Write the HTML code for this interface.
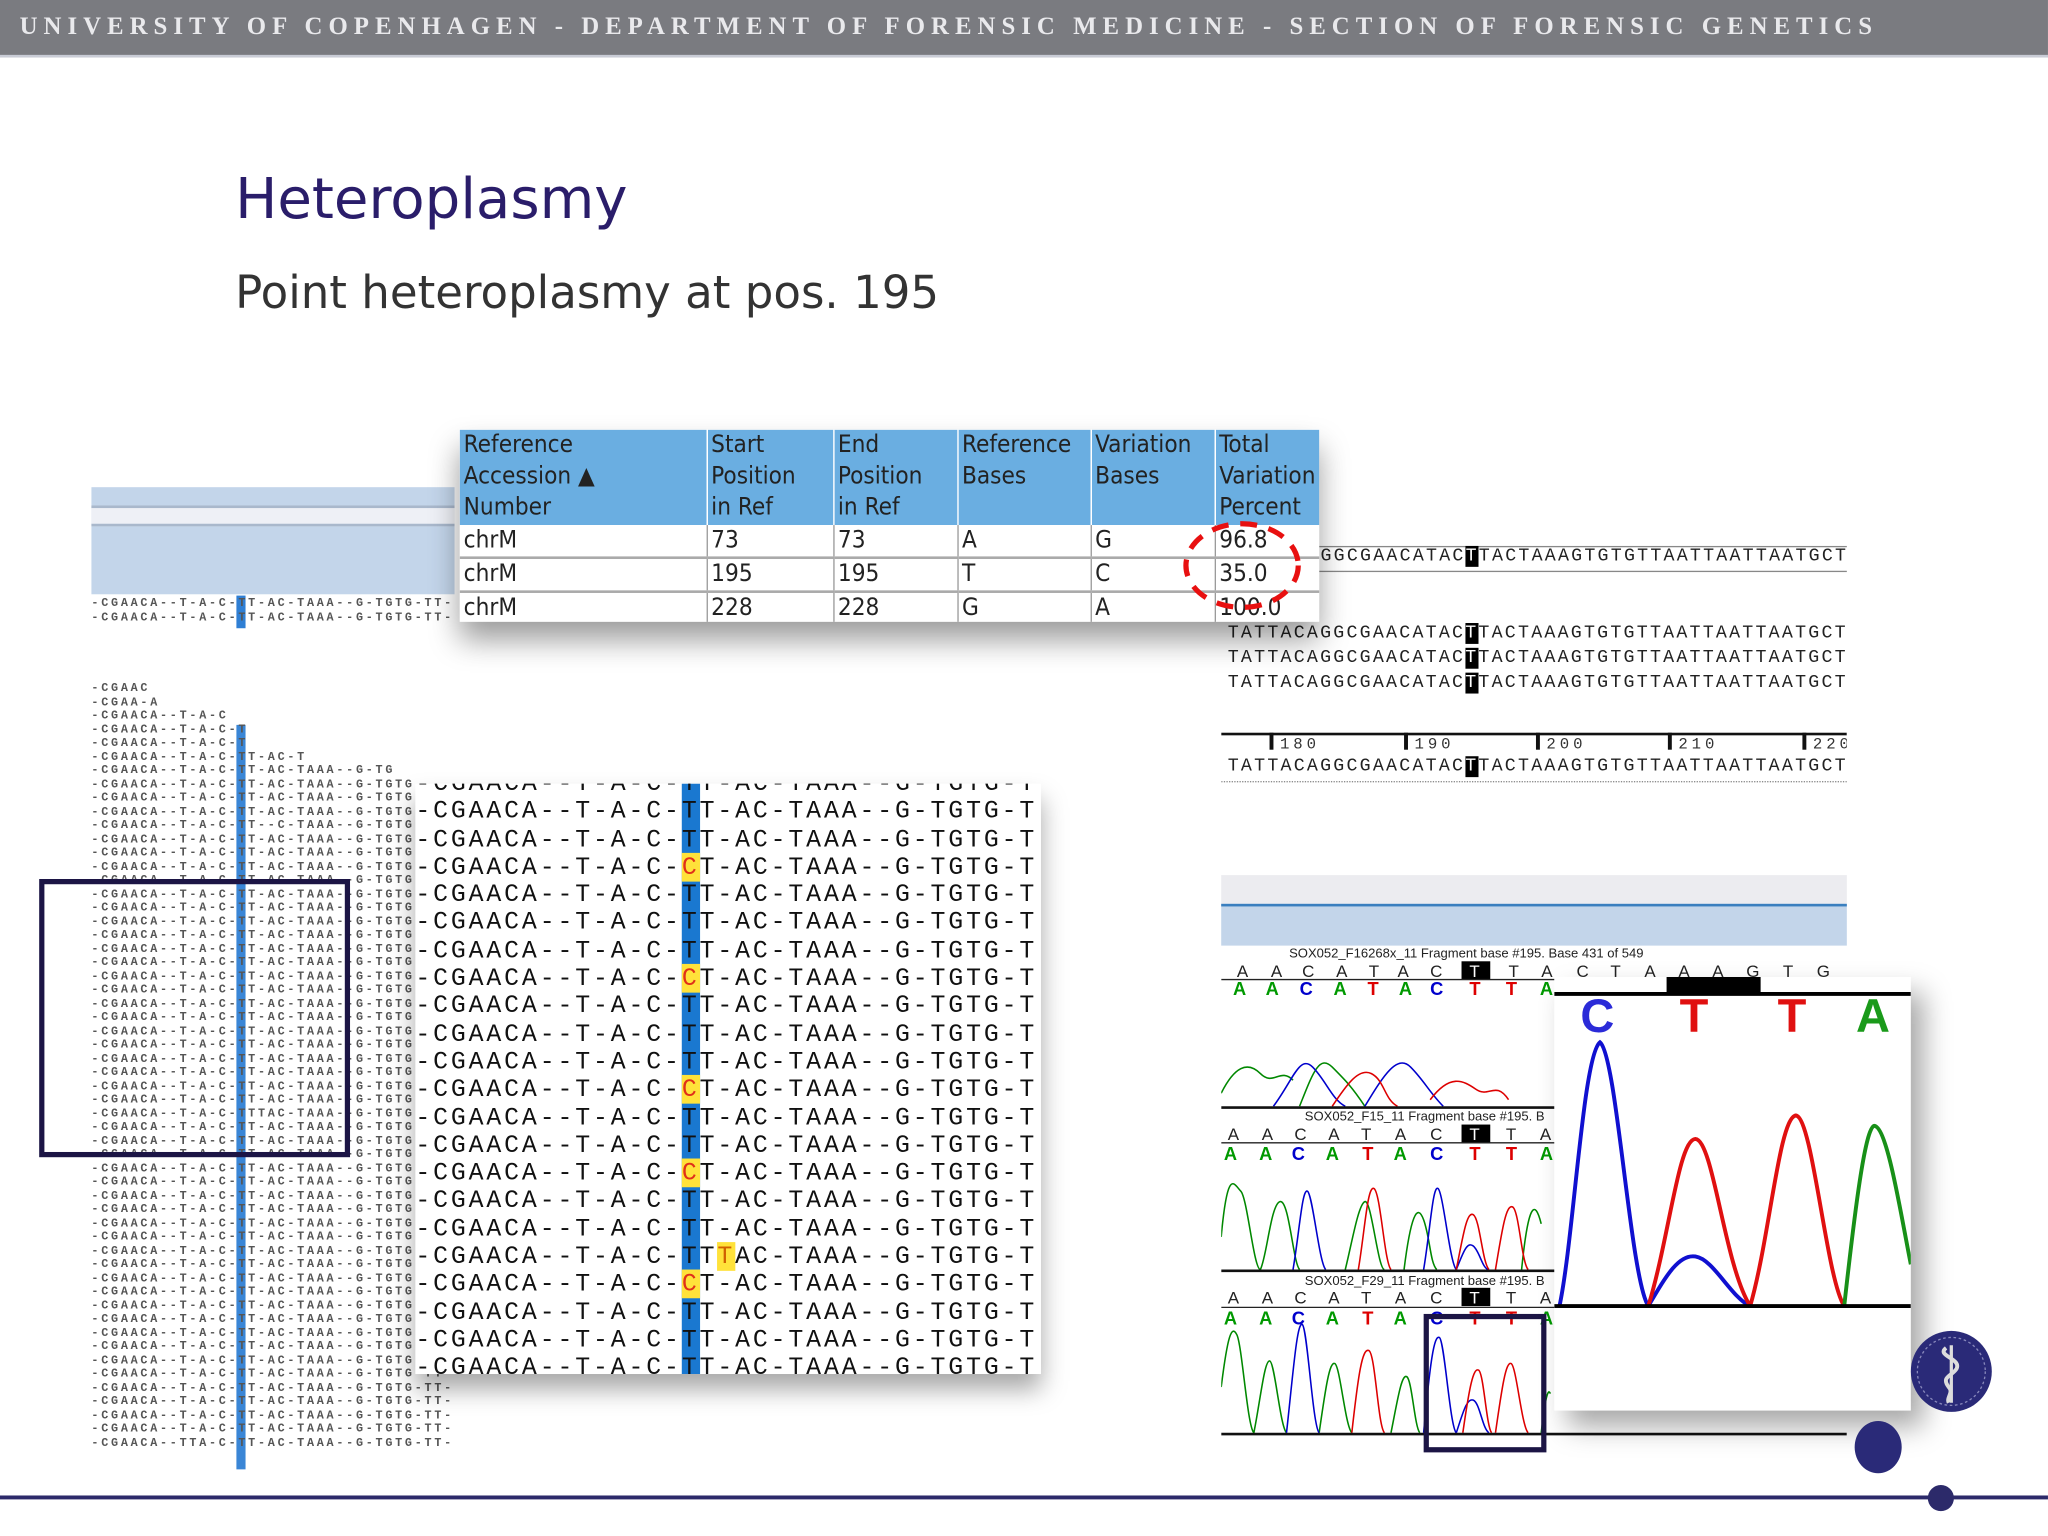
<!DOCTYPE html>
<html><head><meta charset="utf-8">
<style>
html,body{margin:0;padding:0;background:#fff;}
body{width:2048px;height:1536px;overflow:hidden;position:relative;}
#c{position:absolute;left:0;top:0;width:1568px;height:1176px;transform:scale(1.3061);transform-origin:0 0;}
.a{position:absolute;}
.hdr{left:0;top:0;width:1568px;height:42px;background:#7a7b80;border-bottom:2px solid #c9ccd6;}
.hdr span{position:absolute;left:15px;top:10px;font-family:"Liberation Serif",serif;font-size:19px;font-weight:bold;letter-spacing:4.6px;color:#e9e9ec;white-space:nowrap;}
.title{left:180px;top:128px;font-family:"DejaVu Sans",sans-serif;font-size:43px;color:#2a1d6a;}
.sub{left:180px;top:205px;font-family:"DejaVu Sans",sans-serif;font-size:34.5px;color:#333;}
table{border-collapse:collapse;font-family:"DejaVu Sans Condensed","Liberation Sans",sans-serif;font-size:18.5px;color:#222;}
td{padding:0 0 0 3px;vertical-align:top;white-space:nowrap;overflow:hidden;}
.th td{background:#6aaee1;line-height:24px;height:73px;border-right:1px solid #fff;}
.tr td{background:#fff;height:24px;line-height:24px;border-right:1px solid #999;border-bottom:2px solid #aaa;}
.mono{font-family:"Liberation Mono",monospace;white-space:pre;}
.lseq{font-size:9px;letter-spacing:2.1px;line-height:10.5px;color:#555;font-weight:bold;}
.mseq{font-size:19px;letter-spacing:2.2px;line-height:21.3px;color:#111;}
.rseq{font-size:14px;letter-spacing:1.7px;color:#222;}
.hl{background:#000;color:#fff;}
.yc{background:#ffe23a;color:#e0301a;}
</style></head><body><div id="c">
<div class="a hdr"><span>UNIVERSITY OF COPENHAGEN - DEPARTMENT OF FORENSIC MEDICINE - SECTION OF FORENSIC GENETICS</span></div>
<div class="a title">Heteroplasmy</div>
<div class="a sub">Point heteroplasmy at pos. 195</div>

<div class="a" style="left:70px;top:373px;width:278px;height:82px;background:#c3d5ea;"></div>
<div class="a" style="left:70px;top:387px;width:278px;height:12px;background:#eef0f6;border-top:2px solid #a9b8cc;border-bottom:2px solid #a9b8cc;"></div>
<div class="a" style="left:181px;top:456px;width:7px;height:25px;background:#2f7fd4;"></div>
<div class="a mono lseq" style="left:70px;top:457px;">-CGAACA--T-A-C-TT-AC-TAAA--G-TGTG-TT-
-CGAACA--T-A-C-TT-AC-TAAA--G-TGTG-TT-</div>

<div class="a" style="left:181px;top:555px;width:7px;height:570px;background:#3a86d6;"></div>
<div class="a mono lseq" style="left:70px;top:522px;">-CGAAC
-CGAA-A
-CGAACA--T-A-C
-CGAACA--T-A-C-T
-CGAACA--T-A-C-T
-CGAACA--T-A-C-TT-AC-T
-CGAACA--T-A-C-TT-AC-TAAA--G-TG
-CGAACA--T-A-C-TT-AC-TAAA--G-TGTG
-CGAACA--T-A-C-TT-AC-TAAA--G-TGTG
-CGAACA--T-A-C-TT-AC-TAAA--G-TGTG
-CGAACA--T-A-C-TT--C-TAAA--G-TGTG
-CGAACA--T-A-C-TT-AC-TAAA--G-TGTG
-CGAACA--T-A-C-TT-AC-TAAA--G-TGTG
-CGAACA--T-A-C-TT-AC-TAAA--G-TGTG
-CGAACA--T-A-C-TT-AC-TAAA--G-TGTG
-CGAACA--T-A-C-TT-AC-TAAA--G-TGTG
-CGAACA--T-A-C-TT-AC-TAAA--G-TGTG
-CGAACA--T-A-C-TT-AC-TAAA--G-TGTG
-CGAACA--T-A-C-TT-AC-TAAA--G-TGTG
-CGAACA--T-A-C-TT-AC-TAAA--G-TGTG
-CGAACA--T-A-C-TT-AC-TAAA--G-TGTG
-CGAACA--T-A-C-TT-AC-TAAA--G-TGTG
-CGAACA--T-A-C-TT-AC-TAAA--G-TGTG
-CGAACA--T-A-C-TT-AC-TAAA--G-TGTG
-CGAACA--T-A-C-TT-AC-TAAA--G-TGTG
-CGAACA--T-A-C-TT-AC-TAAA--G-TGTG
-CGAACA--T-A-C-TT-AC-TAAA--G-TGTG
-CGAACA--T-A-C-TT-AC-TAAA--G-TGTG
-CGAACA--T-A-C-TT-AC-TAAA--G-TGTG
-CGAACA--T-A-C-TT-AC-TAAA--G-TGTG
-CGAACA--T-A-C-TT-AC-TAAA--G-TGTG
-CGAACA--T-A-C-TTTAC-TAAA--G-TGTG
-CGAACA--T-A-C-TT-AC-TAAA--G-TGTG
-CGAACA--T-A-C-TT-AC-TAAA--G-TGTG
-CGAACA--T-A-C-TT-AC-TAAA--G-TGTG
-CGAACA--T-A-C-TT-AC-TAAA--G-TGTG
-CGAACA--T-A-C-TT-AC-TAAA--G-TGTG
-CGAACA--T-A-C-TT-AC-TAAA--G-TGTG
-CGAACA--T-A-C-TT-AC-TAAA--G-TGTG
-CGAACA--T-A-C-TT-AC-TAAA--G-TGTG
-CGAACA--T-A-C-TT-AC-TAAA--G-TGTG
-CGAACA--T-A-C-TT-AC-TAAA--G-TGTG
-CGAACA--T-A-C-TT-AC-TAAA--G-TGTG
-CGAACA--T-A-C-TT-AC-TAAA--G-TGTG
-CGAACA--T-A-C-TT-AC-TAAA--G-TGTG
-CGAACA--T-A-C-TT-AC-TAAA--G-TGTG
-CGAACA--T-A-C-TT-AC-TAAA--G-TGTG
-CGAACA--T-A-C-TT-AC-TAAA--G-TGTG
-CGAACA--T-A-C-TT-AC-TAAA--G-TGTG-TT-
-CGAACA--T-A-C-TT-AC-TAAA--G-TGTG-TT-
-CGAACA--T-A-C-TT-AC-TAAA--G-TGTG-TT-
-CGAACA--T-A-C-TT-AC-TAAA--G-TGTG-TT-
-CGAACA--T-A-C-TT-AC-TAAA--G-TGTG-TT-
-CGAACA--T-A-C-TT-AC-TAAA--G-TGTG-TT-
-CGAACA--T-A-C-TT-AC-TAAA--G-TGTG-TT-
-CGAACA--TTA-C-TT-AC-TAAA--G-TGTG-TT-</div>
<div class="a" style="left:30px;top:673px;width:230px;height:205px;border:4px solid #1c1545;"></div>

<div class="a" style="left:318px;top:600px;width:479px;height:452px;background:#fff;box-shadow:0 12px 18px rgba(0,0,0,.35);overflow:hidden;">
<div class="a" style="left:204px;top:0;width:14px;height:452px;background:#1a78d0;"></div>
<div class="a mono mseq" style="left:0px;top:-10px;">-CGAACA--T-A-C-TT-AC-TAAA--G-TGTG-T
-CGAACA--T-A-C-TT-AC-TAAA--G-TGTG-T
-CGAACA--T-A-C-TT-AC-TAAA--G-TGTG-T
-CGAACA--T-A-C-<span class="yc">C</span>T-AC-TAAA--G-TGTG-T
-CGAACA--T-A-C-TT-AC-TAAA--G-TGTG-T
-CGAACA--T-A-C-TT-AC-TAAA--G-TGTG-T
-CGAACA--T-A-C-TT-AC-TAAA--G-TGTG-T
-CGAACA--T-A-C-<span class="yc">C</span>T-AC-TAAA--G-TGTG-T
-CGAACA--T-A-C-TT-AC-TAAA--G-TGTG-T
-CGAACA--T-A-C-TT-AC-TAAA--G-TGTG-T
-CGAACA--T-A-C-TT-AC-TAAA--G-TGTG-T
-CGAACA--T-A-C-<span class="yc">C</span>T-AC-TAAA--G-TGTG-T
-CGAACA--T-A-C-TT-AC-TAAA--G-TGTG-T
-CGAACA--T-A-C-TT-AC-TAAA--G-TGTG-T
-CGAACA--T-A-C-<span class="yc">C</span>T-AC-TAAA--G-TGTG-T
-CGAACA--T-A-C-TT-AC-TAAA--G-TGTG-T
-CGAACA--T-A-C-TT-AC-TAAA--G-TGTG-T
-CGAACA--T-A-C-TT<span class="yc" style="color:#d06000">T</span>AC-TAAA--G-TGTG-T
-CGAACA--T-A-C-<span class="yc">C</span>T-AC-TAAA--G-TGTG-T
-CGAACA--T-A-C-TT-AC-TAAA--G-TGTG-T
-CGAACA--T-A-C-TT-AC-TAAA--G-TGTG-T
-CGAACA--T-A-C-TT-AC-TAAA--G-TGTG-T</div>
</div>

<div class="a" style="left:935px;top:418px;width:479px;border-top:1px solid #888;"></div>
<div class="a" style="left:935px;top:437px;width:479px;border-top:1px solid #888;"></div>
<div class="a" style="left:935px;top:415px;width:479px;height:200px;overflow:hidden;">
<div class="a mono rseq" style="left:76px;top:3px;">GGCGAACATAC<span class="hl">T</span>TACTAAAGTGTGTTAATTAATTAATGCT</div>
<div class="a mono rseq" style="left:5px;top:61px;line-height:19px;">TATTACAGGCGAACATAC<span class="hl">T</span>TACTAAAGTGTGTTAATTAATTAATGCT
TATTACAGGCGAACATAC<span class="hl">T</span>TACTAAAGTGTGTTAATTAATTAATGCT
TATTACAGGCGAACATAC<span class="hl">T</span>TACTAAAGTGTGTTAATTAATTAATGCT</div>
<div class="a" style="left:0;top:146px;width:479px;height:2px;background:#111;"></div>
<div class="a" style="left:37px;top:146px;width:3px;height:13px;background:#111;"></div>
<div class="a" style="left:140px;top:146px;width:3px;height:13px;background:#111;"></div>
<div class="a" style="left:241px;top:146px;width:3px;height:13px;background:#111;"></div>
<div class="a" style="left:342px;top:146px;width:3px;height:13px;background:#111;"></div>
<div class="a" style="left:445px;top:146px;width:3px;height:13px;background:#111;"></div>
<div class="a mono" style="left:45px;top:148px;font-size:12px;letter-spacing:3px;color:#333;">180</div>
<div class="a mono" style="left:148px;top:148px;font-size:12px;letter-spacing:3px;color:#333;">190</div>
<div class="a mono" style="left:249px;top:148px;font-size:12px;letter-spacing:3px;color:#333;">200</div>
<div class="a mono" style="left:350px;top:148px;font-size:12px;letter-spacing:3px;color:#333;">210</div>
<div class="a mono" style="left:453px;top:148px;font-size:12px;letter-spacing:3px;color:#333;">220</div>
<div class="a mono rseq" style="left:5px;top:164px;">TATTACAGGCGAACATAC<span class="hl">T</span>TACTAAAGTGTGTTAATTAATTAATGCT</div>
<div class="a" style="left:0;top:183px;width:479px;border-top:1px dotted #888;"></div>
</div>

<div class="a" style="left:352px;top:329px;width:658px;height:147px;box-shadow:0 14px 22px rgba(0,0,0,.4);overflow:hidden;background:#fff;">
<table style="width:680px;table-layout:fixed;">
<colgroup><col style="width:189px"><col style="width:97px"><col style="width:95px"><col style="width:102px"><col style="width:95px"><col style="width:102px"></colgroup>
<tr class="th"><td>Reference<br>Accession ▲<br>Number</td><td>Start<br>Position<br>in Ref</td><td>End<br>Position<br>in Ref</td><td>Reference<br>Bases</td><td>Variation<br>Bases</td><td>Total<br>Variation<br>Percent</td></tr>
<tr class="tr"><td>chrM</td><td>73</td><td>73</td><td>A</td><td>G</td><td>96.8</td></tr>
<tr class="tr"><td>chrM</td><td>195</td><td>195</td><td>T</td><td>C</td><td>35.0</td></tr>
<tr class="tr"><td>chrM</td><td>228</td><td>228</td><td>G</td><td>A</td><td>100.0</td></tr>
</table></div>
<svg class="a" style="left:900px;top:395px;" width="110" height="80"><ellipse cx="51" cy="38" rx="43" ry="32" fill="none" stroke="#e81010" stroke-width="4" stroke-dasharray="13 9"/></svg>

<div class="a" style="left:935px;top:670px;width:479px;height:22px;background:#ececf0;"></div>
<div class="a" style="left:935px;top:692px;width:479px;height:30px;background:#c3d5ea;border-top:2px solid #3a7fbf;"></div>
<svg class="a" style="left:935px;top:722px;" width="479" height="390" font-family="Liberation Sans, sans-serif">
<text x="52" y="11" font-size="10" fill="#222">SOX052_F16268x_11 Fragment base #195. Base 431 of 549</text>
<g font-size="13" fill="#222"><text x="12" y="26">A</text><text x="38" y="26">A</text><text x="62" y="26">C</text><text x="88" y="26">A</text><text x="113" y="26">T</text><text x="135" y="26">A</text><text x="160" y="26">C</text><rect x="184" y="14" width="22" height="14" fill="#000"/><text x="190" y="26" fill="#fff">T</text><text x="220" y="26">T</text><text x="245" y="26">A</text><text x="272" y="26">C</text><text x="298" y="26">T</text><text x="324" y="26">A</text><text x="350" y="26">A</text><text x="376" y="26">A</text><text x="402" y="26">G</text><text x="430" y="26">T</text><text x="456" y="26">G</text></g>
<line x1="0" y1="28" x2="479" y2="28" stroke="#222"/>
<g font-size="14" font-weight="bold"><text x="9" y="40" fill="#090">A</text><text x="34" y="40" fill="#090">A</text><text x="60" y="40" fill="#00c">C</text><text x="86" y="40" fill="#090">A</text><text x="112" y="40" fill="#d00">T</text><text x="136" y="40" fill="#090">A</text><text x="160" y="40" fill="#00c">C</text><text x="190" y="40" fill="#d00">T</text><text x="218" y="40" fill="#d00">T</text><text x="244" y="40" fill="#090">A</text></g>
<g fill="none" stroke-width="1.2">
<path d="M0 115 C10 95 20 90 30 100 S45 95 55 105 M60 125 C70 100 75 85 85 95 S100 110 110 125" stroke="#080"/>
<path d="M40 125 C55 105 60 85 70 95 S85 120 95 125 M110 125 C125 100 135 85 145 95 S160 115 170 125" stroke="#00c"/>
<path d="M85 125 C95 110 105 95 115 100 S125 120 135 125 M160 120 C175 100 185 105 195 112 S210 105 220 120" stroke="#d00"/>
</g>
<line x1="0" y1="126" x2="479" y2="126" stroke="#111" stroke-width="2"/>
<text x="64" y="136" font-size="10" fill="#222">SOX052_F15_11 Fragment base #195. B</text>
<g font-size="13" fill="#222"><text x="5" y="151">A</text><text x="31" y="151">A</text><text x="56" y="151">C</text><text x="82" y="151">A</text><text x="107" y="151">T</text><text x="133" y="151">A</text><text x="160" y="151">C</text><rect x="184" y="139" width="22" height="14" fill="#000"/><text x="190" y="151" fill="#fff">T</text><text x="218" y="151">T</text><text x="244" y="151">A</text></g>
<line x1="0" y1="153" x2="479" y2="153" stroke="#222"/>
<g font-size="14" font-weight="bold"><text x="2" y="166" fill="#090">A</text><text x="29" y="166" fill="#090">A</text><text x="54" y="166" fill="#00c">C</text><text x="80" y="166" fill="#090">A</text><text x="108" y="166" fill="#d00">T</text><text x="132" y="166" fill="#090">A</text><text x="160" y="166" fill="#00c">C</text><text x="190" y="166" fill="#d00">T</text><text x="218" y="166" fill="#d00">T</text><text x="244" y="166" fill="#090">A</text></g>
<g fill="none" stroke-width="1.2">
<path d="M0 225 C5 170 10 185 15 190 S25 250 30 250 C35 240 38 200 45 198 S55 245 60 250 M95 250 C100 230 105 200 110 198 S120 250 125 250 M140 250 C145 210 150 198 155 212 S160 245 165 250 M230 250 C235 200 240 195 245 215" stroke="#080"/>
<path d="M55 250 C60 220 62 188 66 190 S75 245 80 250 M155 250 C160 220 162 185 166 188 S175 245 180 250 M180 250 C185 238 188 228 193 232 S200 250 205 250" stroke="#00c"/>
<path d="M105 250 C110 220 112 185 117 188 S125 245 130 250 M180 250 C185 225 188 205 193 208 S200 245 205 250 M210 250 C215 220 218 200 223 202 S230 245 235 250" stroke="#d00"/>
</g>
<line x1="0" y1="251" x2="479" y2="251" stroke="#111" stroke-width="2"/>
<text x="64" y="262" font-size="10" fill="#222">SOX052_F29_11 Fragment base #195. B</text>
<g font-size="13" fill="#222"><text x="5" y="276">A</text><text x="31" y="276">A</text><text x="56" y="276">C</text><text x="82" y="276">A</text><text x="107" y="276">T</text><text x="133" y="276">A</text><text x="160" y="276">C</text><rect x="184" y="264" width="22" height="14" fill="#000"/><text x="190" y="276" fill="#fff">T</text><text x="218" y="276">T</text><text x="244" y="276">A</text></g>
<line x1="0" y1="279" x2="479" y2="279" stroke="#222"/>
<g font-size="14" font-weight="bold"><text x="2" y="292" fill="#090">A</text><text x="29" y="292" fill="#090">A</text><text x="54" y="292" fill="#00c">C</text><text x="80" y="292" fill="#090">A</text><text x="108" y="292" fill="#d00">T</text><text x="132" y="292" fill="#090">A</text><text x="160" y="292" fill="#00c">C</text><text x="190" y="292" fill="#d00">T</text><text x="218" y="292" fill="#d00">T</text><text x="244" y="292" fill="#090">A</text></g>
<g fill="none" stroke-width="1.2">
<path d="M0 340 C5 300 8 292 12 300 S20 370 25 375 C30 350 33 320 37 320 S45 370 50 375 M75 375 C80 340 83 320 87 322 S95 370 100 375 M130 375 C135 350 138 330 142 332 S148 370 152 375 M245 375 C248 350 250 340 252 345" stroke="#080"/>
<path d="M50 375 C55 330 58 290 62 292 S70 370 75 375 M155 375 C160 320 163 300 167 302 S175 370 180 375 M180 375 C185 360 188 348 193 350 S200 372 205 375" stroke="#00c"/>
<path d="M100 375 C105 330 108 310 113 312 S120 370 125 375 M185 375 C190 340 193 325 197 327 S203 370 207 375 M210 375 C215 340 218 320 222 322 S230 370 235 375" stroke="#d00"/>
</g>
<line x1="0" y1="376" x2="479" y2="376" stroke="#111" stroke-width="2"/>
</svg>
<div class="a" style="left:1090px;top:1006px;width:86px;height:98px;border:4px solid #1c1545;"></div>

<div class="a" style="left:1190px;top:748px;width:273px;height:332px;background:#fff;box-shadow:10px 12px 20px rgba(0,0,0,.35);"></div>
<svg class="a" style="left:1190px;top:748px;" width="273" height="332" font-family="Liberation Sans, sans-serif">
<rect x="86" y="0" width="72" height="12" fill="#000"/>
<line x1="0" y1="13" x2="273" y2="13" stroke="#000" stroke-width="3"/>
<g font-size="36" font-weight="bold"><text x="20" y="42" fill="#2b2bd8">C</text><text x="96" y="42" fill="#e01010">T</text><text x="171" y="42" fill="#e01010">T</text><text x="231" y="42" fill="#1a9a1a">A</text></g>
<g fill="none" stroke-width="3">
<path d="M4 252 C15 200 22 60 35 50 C48 60 58 230 72 252" stroke="#1010d0"/>
<path d="M72 252 C85 230 95 212 108 214 C122 216 135 245 150 252" stroke="#1010d0"/>
<path d="M72 252 C88 200 95 125 108 124 C122 125 130 220 150 252" stroke="#e01010"/>
<path d="M150 252 C165 200 172 108 185 106 C198 108 208 230 222 252" stroke="#e01010"/>
<path d="M222 252 C230 180 238 115 245 114 C255 115 265 180 273 220" stroke="#189018"/>
</g>
<line x1="0" y1="252" x2="273" y2="252" stroke="#000" stroke-width="3"/>
</svg>

<svg class="a" style="left:1462px;top:1018px;" width="66" height="66"><circle cx="32" cy="32" r="31" fill="#2a2a78"/><circle cx="32" cy="32" r="26" fill="none" stroke="#8888bb" stroke-width="1" stroke-dasharray="2 2"/><path d="M28 14 C20 20 40 22 36 30 C32 36 24 36 30 44 C34 48 28 52 30 56" stroke="#ddd" stroke-width="3" fill="none"/><line x1="32" y1="12" x2="32" y2="56" stroke="#ddd" stroke-width="2.5"/></svg>
<div class="a" style="left:1420px;top:1088px;width:36px;height:40px;border-radius:50%;background:#2a2a78;"></div>
<div class="a" style="left:0;top:1145px;width:1568px;height:3px;background:#2c2a6a;"></div>
<div class="a" style="left:1476px;top:1137px;width:20px;height:20px;border-radius:50%;background:#2c2a6a;"></div>
</div></body></html>
